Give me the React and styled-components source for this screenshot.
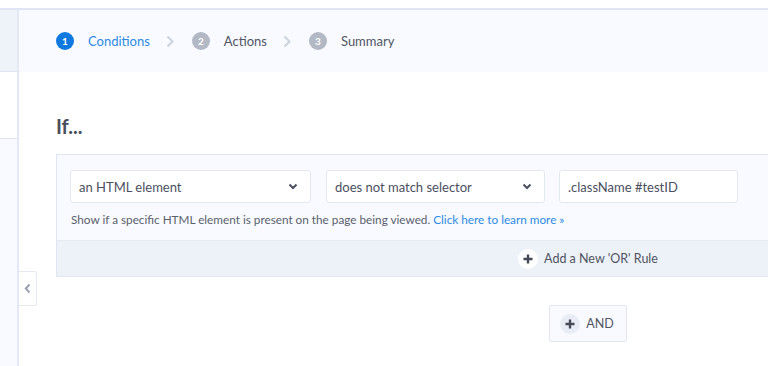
import React from "react";
import styled, { createGlobalStyle } from "styled-components";

const Global = createGlobalStyle`
  html, body { margin: 0; padding: 0; background: #ffffff; }
  body { font-family: Lato, "Open Sans", Arial, sans-serif; color: #4b5060; overflow: hidden; }
  * { box-sizing: border-box; }
`;

const Page = styled.div`
  display: flex;
  flex-direction: column;
  height: 366px;
  overflow: hidden;
`;

const TopStrip = styled.div`
  height: 10px;
  background: #ffffff;
  border-bottom: 2px solid #e1e4f4;
  flex: none;
`;

const Body = styled.div`
  display: flex;
  flex: 1;
  min-height: 0;
`;

const Sidebar = styled.div`
  width: 19px;
  flex: none;
  border-right: 2px solid #e3e8f4;
  display: flex;
  flex-direction: column;
`;

const SideBlock = styled.div`
  height: ${(p) => p.$h}px;
  background: ${(p) => p.$bg};
  border-bottom: 1px solid #dfe5ef;
  flex: none;
`;

const SideRest = styled.div`
  flex: 1;
  background: #f8faff;
`;

const Main = styled.div`
  flex: 1;
  position: relative;
  display: flex;
  flex-direction: column;
  min-width: 0;
`;

const Header = styled.div`
  height: 62px;
  background: #f8faff;
  display: flex;
  align-items: center;
  padding-left: 37px;
  flex: none;
`;

const Step = styled.div`
  display: flex;
  align-items: center;
  gap: 14px;
`;

const StepNum = styled.span`
  width: 18px;
  height: 18px;
  border-radius: 50%;
  background: ${(p) => (p.$active ? "#1079e0" : "#b3b8c5")};
  color: #ffffff;
  font-size: 10px;
  font-weight: 700;
  display: flex;
  align-items: center;
  justify-content: center;
`;

const StepLabel = styled.span`
  font-size: 13px;
  color: ${(p) => (p.$active ? "#2b8ae2" : "#50555f")};
`;

const StepSep = styled.span`
  display: flex;
  align-items: center;
  margin: 0 18px 0 16px;
`;

const Content = styled.div`
  padding-left: 37px;
  display: flex;
  flex-direction: column;
  width: 1100px;
`;

const Title = styled.h2`
  margin: 42px 0 16px;
  font-size: 20px;
  line-height: 24px;
  font-weight: 700;
  color: #4a4f5b;
`;

const Card = styled.div`
  border: 1px solid #e0e6f0;
  width: 1064px;
`;

const CardTop = styled.div`
  background: #f8faff;
  padding: 15px 13px 12px;
`;

const FieldRow = styled.div`
  display: flex;
  align-items: center;
`;

const Select = styled.div`
  width: ${(p) => p.$w}px;
  height: 33px;
  margin-right: ${(p) => p.$mr || 0}px;
  background: #ffffff;
  border: 1px solid #e3e7ef;
  border-radius: 3px;
  display: flex;
  align-items: center;
  justify-content: space-between;
  padding: 0 12px 0 8px;
  font-size: 13px;
  color: #4b5060;
`;

const Help = styled.div`
  margin-top: 9px;
  font-size: 11.75px;
  line-height: 16px;
  color: #5a5f6b;
  padding-left: 1px;
`;

const HelpLink = styled.a`
  color: #2b8ae2;
  text-decoration: none;
`;

const CardBottom = styled.div`
  height: 36px;
  background: #edf1f8;
  border-top: 1px solid #e6ebf3;
  display: flex;
  align-items: center;
  justify-content: center;
  gap: 6px;
  font-size: 12.5px;
  color: #50555f;
`;

const PlusCircle = styled.span`
  width: 20px;
  height: 20px;
  border-radius: 50%;
  background: ${(p) => p.$bg};
  display: flex;
  align-items: center;
  justify-content: center;
`;

const AndRow = styled.div`
  width: 1064px;
  display: flex;
  justify-content: center;
  margin-top: 28px;
`;

const AndButton = styled.div`
  width: 78px;
  height: 37px;
  border: 1px solid #e1e6ef;
  border-radius: 2px;
  background: #f8faff;
  display: flex;
  align-items: center;
  justify-content: center;
  gap: 6px;
  font-size: 12.5px;
  color: #50555f;
  padding-right: 2px;
`;

const CollapseTab = styled.div`
  position: absolute;
  left: 0;
  top: 261px;
  width: 18px;
  height: 35px;
  background: #ffffff;
  border: 1px solid #e3e8f2;
  border-left: none;
  border-radius: 0 3px 3px 0;
  display: flex;
  align-items: center;
  justify-content: center;
`;

const StepChevron = () => (
  <svg width="8" height="13" viewBox="0 0 8 13">
    <path d="M1.5 1.5 L6.5 6.5 L1.5 11.5" fill="none" stroke="#cdd2db" strokeWidth="2" />
  </svg>
);

const DownChevron = () => (
  <svg width="10" height="7" viewBox="0 0 10 7">
    <path d="M1.5 1.5 L5 5 L8.5 1.5" fill="none" stroke="#4b5060" strokeWidth="2" />
  </svg>
);

const Plus = () => (
  <svg width="10" height="10" viewBox="0 0 10 10">
    <path d="M5 0.5 V9.5 M0.5 5 H9.5" stroke="#454a56" strokeWidth="2.4" />
  </svg>
);

const steps = [
  { n: 1, label: "Conditions", active: true },
  { n: 2, label: "Actions" },
  { n: 3, label: "Summary" },
];

export default function App() {
  return (
    <Page>
      <Global />
      <TopStrip />
      <Body>
        <Sidebar>
          <SideBlock $h={62} $bg="#eef2f9" />
          <SideBlock $h={67} $bg="#ffffff" />
          <SideRest />
        </Sidebar>
        <Main>
          <Header>
            {steps.map((s, i) => (
              <React.Fragment key={s.n}>
                {i > 0 && (
                  <StepSep>
                    <StepChevron />
                  </StepSep>
                )}
                <Step>
                  <StepNum $active={s.active}>{s.n}</StepNum>
                  <StepLabel $active={s.active}>{s.label}</StepLabel>
                </Step>
              </React.Fragment>
            ))}
          </Header>
          <Content>
            <Title>If...</Title>
            <Card>
              <CardTop>
                <FieldRow>
                  <Select $w={241} $mr={15}>
                    <span>an HTML element</span>
                    <DownChevron />
                  </Select>
                  <Select $w={219} $mr={14}>
                    <span>does not match selector</span>
                    <DownChevron />
                  </Select>
                  <Select $w={179}>
                    <span>.className #testID</span>
                  </Select>
                </FieldRow>
                <Help>
                  Show if a specific HTML element is present on the page being viewed.{" "}
                  <HelpLink>Click here to learn more »</HelpLink>
                </Help>
              </CardTop>
              <CardBottom>
                <PlusCircle $bg="#ffffff">
                  <Plus />
                </PlusCircle>
                <span>Add a New 'OR' Rule</span>
              </CardBottom>
            </Card>
            <AndRow>
              <AndButton>
                <PlusCircle $bg="#e8edf5">
                  <Plus />
                </PlusCircle>
                <span>AND</span>
              </AndButton>
            </AndRow>
          </Content>
          <CollapseTab>
            <svg width="7" height="11" viewBox="0 0 7 11">
              <path d="M5.5 1.5 L1.8 5.5 L5.5 9.5" fill="none" stroke="#9aa2b4" strokeWidth="2" />
            </svg>
          </CollapseTab>
        </Main>
      </Body>
    </Page>
  );
}
